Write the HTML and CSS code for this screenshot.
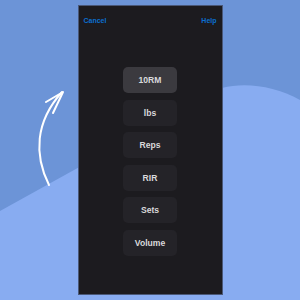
FILE: index.html
```html
<!DOCTYPE html>
<html>
<head>
<meta charset="utf-8">
<link rel="stylesheet" href="styles.css">
</head>
<body>
<div class="stage">
  <svg class="bg" width="300" height="300" viewBox="0 0 300 300">
    <rect width="300" height="300" fill="#6c94d7"/>
    <path d="M0 211 L222 88 C 245 82, 275 86, 300 100 L300 300 L0 300 Z" fill="#88acf1"/>
    <path d="M49 185 C 34 155, 35 122, 62 92" fill="none" stroke="#fff" stroke-width="2" stroke-linecap="round"/>
    <path d="M46 102 L63 92 L53 113" fill="none" stroke="#fff" stroke-width="2" stroke-linecap="round" stroke-linejoin="round"/>
  </svg>
  <div class="phone">
    <div class="header">
      <span class="link">Cancel</span>
      <span class="link">Help</span>
    </div>
    <div class="options">
      <div class="opt active">10RM</div>
      <div class="opt">lbs</div>
      <div class="opt">Reps</div>
      <div class="opt">RIR</div>
      <div class="opt">Sets</div>
      <div class="opt">Volume</div>
    </div>
  </div>
</div>
</body>
</html>
```
FILE: styles.css
```css
html, body {
  margin: 0;
  padding: 0;
  width: 300px;
  height: 300px;
  overflow: hidden;
}
.stage {
  position: relative;
  width: 300px;
  height: 300px;
  display: flex;
  justify-content: center;
  padding-top: 5px;
  box-sizing: border-box;
  font-family: "Liberation Sans", Arial, sans-serif;
}
.bg {
  position: absolute;
  left: 0;
  top: 0;
}
.phone {
  position: relative;
  width: 145px;
  height: 290px;
  box-sizing: border-box;
  background: #1c1b1f;
  border: 1px solid #4a5878;
  display: flex;
  flex-direction: column;
  align-items: center;
}
.header {
  align-self: stretch;
  display: flex;
  justify-content: space-between;
  padding: 11px 5px 0 5px;
  line-height: 8px;
}
.link {
  color: #0b6fcf;
  font-size: 7px;
  font-weight: bold;
}
.options {
  margin-top: 42px;
  display: flex;
  flex-direction: column;
  gap: 6.6px;
}
.opt {
  width: 54px;
  height: 26px;
  border-radius: 5px;
  background: #242328;
  color: #d9d9db;
  font-size: 8.6px;
  font-weight: bold;
  display: flex;
  align-items: center;
  justify-content: center;
}
.opt.active {
  background: #3b3a3f;
}
```
